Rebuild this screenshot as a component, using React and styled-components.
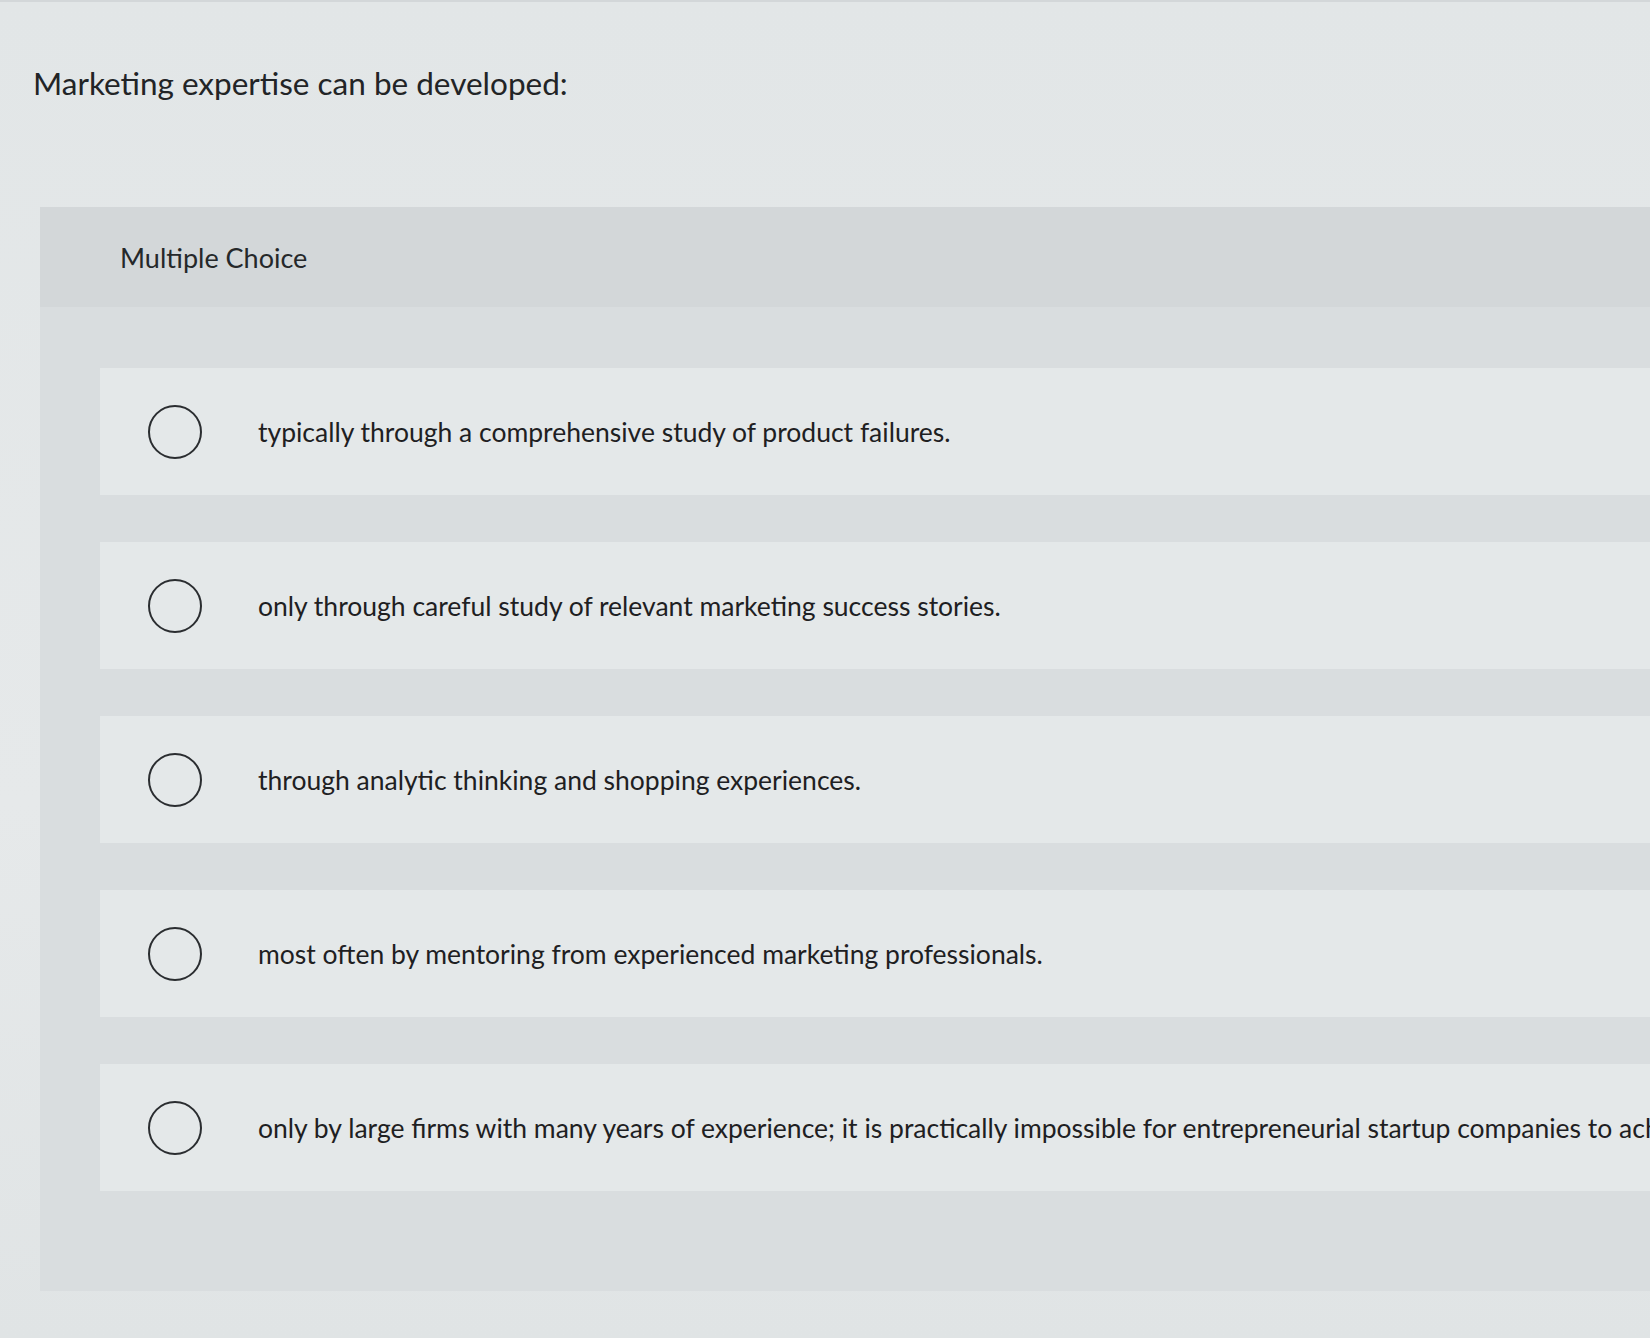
import styled, { createGlobalStyle } from "styled-components";

const GlobalStyle = createGlobalStyle`
  html, body {
    margin: 0;
    padding: 0;
    background: #e3e7e8;
    overflow: hidden;
  }
  body {
    font-family: Lato, "Liberation Sans", sans-serif;
    color: #1d1f21;
  }
`;

const Page = styled.div`
  width: 1650px;
  height: 1338px;
  box-sizing: border-box;
  border-top: 2px solid #d3d7d9;
  background: linear-gradient(180deg, #e2e6e7 0%, #e6e9ea 60%, #e0e4e5 100%);
  overflow: hidden;
`;

const Question = styled.h1`
  margin: 0;
  padding: 62px 0 0 33px;
  height: 205px;
  box-sizing: border-box;
  font-size: 31.5px;
  font-weight: 400;
  color: #222426;
`;

const Panel = styled.section`
  margin-left: 40px;
  background: #d9dddf;
  padding-bottom: 100px;
`;

const PanelHeader = styled.div`
  height: 100px;
  display: flex;
  align-items: center;
  padding-left: 80px;
  background: #d3d7d9;
  font-size: 27px;
  color: #25282a;
`;

const Options = styled.div`
  display: flex;
  flex-direction: column;
  gap: 47px;
  padding: 61px 0 0 60px;
`;

const Option = styled.label`
  height: 127px;
  display: flex;
  align-items: center;
  gap: 56px;
  padding-left: 48px;
  background: #e4e8e9;
  white-space: nowrap;
  cursor: pointer;
`;

const Radio = styled.span`
  flex: none;
  width: 54px;
  height: 54px;
  border-radius: 50%;
  border: 2.5px solid #2a2d30;
  box-sizing: border-box;
`;

const OptionText = styled.span`
  font-size: 26.5px;
  color: #1e2022;
`;

const answers = [
  "typically through a comprehensive study of product failures.",
  "only through careful study of relevant marketing success stories.",
  "through analytic thinking and shopping experiences.",
  "most often by mentoring from experienced marketing professionals.",
  "only by large firms with many years of experience; it is practically impossible for entrepreneurial startup companies to achieve it.",
];

export default function App() {
  return (
    <Page>
      <GlobalStyle />
      <Question>Marketing expertise can be developed:</Question>
      <Panel>
        <PanelHeader>Multiple Choice</PanelHeader>
        <Options>
          {answers.map((a) => (
            <Option key={a}>
              <Radio />
              <OptionText>{a}</OptionText>
            </Option>
          ))}
        </Options>
      </Panel>
    </Page>
  );
}
